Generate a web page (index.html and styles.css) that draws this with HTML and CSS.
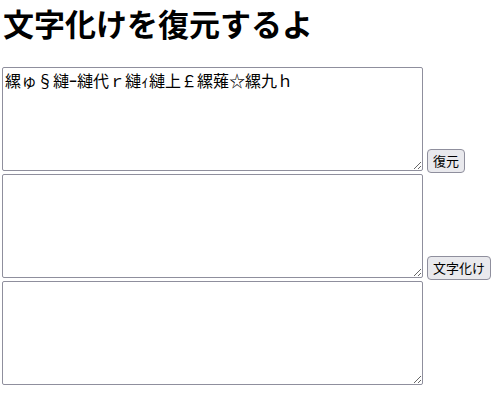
FILE: index.html
```
<!DOCTYPE html>
<html lang="ja">
<head>
<meta charset="utf-8">
<title>文字化けを復元するよ</title>
<link rel="stylesheet" href="styles.css">
</head>
<body class="page">
<h1 class="title">文字化けを復元するよ</h1>
<div class="row first"><textarea class="box">縲ゅ§縺ｰ縺代ｒ縺ｨ縺上￡縲薙☆縲九ｈ</textarea><button class="btn">復元</button></div>
<div class="row"><textarea class="box"></textarea><button class="btn">文字化け</button></div>
<div class="row"><textarea class="box"></textarea></div>
</body>
</html>
```
FILE: styles.css
```
html, body {
  margin: 0;
  background: #fff;
}
.page {
  padding: 0 2px;
  font-family: "Noto Sans CJK JP", "Noto Sans", sans-serif;
  color: #000;
}
.title {
  font-size: 31px;
  font-weight: bold;
  margin: 0;
  padding: 0 0 0 1px;
  line-height: 46px;
}
.row {
  display: flex;
  align-items: flex-end;
  gap: 4px;
  margin-top: 3px;
}
.row.first {
  margin-top: 21px;
}
.box {
  box-sizing: border-box;
  width: 421px;
  height: 104px;
  margin: 0;
  padding: 2px;
  border: 1px solid #8f8f9d;
  border-radius: 2px;
  font-family: "Noto Sans CJK JP", "Noto Sans", sans-serif;
  font-size: 16px;
  line-height: 20px;
  color: #000;
  resize: both;
}
.btn {
  font-family: "Noto Sans CJK JP", "Noto Sans", sans-serif;
  font-size: 13px;
  line-height: 16px;
  padding: 3px 5px;
  margin: 0 0 -2px 0;
  border: 1px solid #8f8f9d;
  border-radius: 4px;
  background: #e9e9ed;
  color: #000;
}
```
